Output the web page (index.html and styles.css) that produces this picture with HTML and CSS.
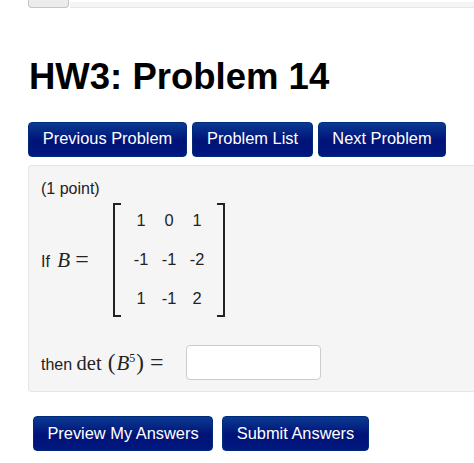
FILE: index.html
```html
<!DOCTYPE html>
<html lang="en">
<head>
  <meta charset="UTF-8" />
  <title>HW3: Problem 14</title>
  <link rel="stylesheet" href="styles.css">
</head>
<body>
  <div class="topbar">
    <div class="top-btn"></div>
    <div class="top-track"></div>
  </div>

  <h1>HW3: Problem 14</h1>

  <nav class="nav-btns">
    <a class="btn btn-prev">Previous Problem</a>
    <a class="btn btn-list">Problem List</a>
    <a class="btn btn-next">Next Problem</a>
  </nav>

  <main class="problem">
    <div class="points">(1 point)</div>
    <div class="matrix-line">
      <span class="label">If <span class="math"><i class="var-b">B</i><span class="rel">=</span></span></span>
      <div class="bracket-wrap">
        <div class="matrix">
          <span>1</span><span>0</span><span>1</span>
          <span>-1</span><span>-1</span><span>-2</span>
          <span>1</span><span>-1</span><span>2</span>
        </div>
      </div>
    </div>
    <div class="answer-line">
      <span class="label">then <span class="math">det <span class="paren">(</span><i>B</i><sup>5</sup><span class="paren">)</span><span class="rel">=</span></span></span>
      <input class="answer" type="text" />
    </div>
  </main>

  <div class="submit-btns">
    <button class="btn btn-preview">Preview My Answers</button>
    <button class="btn btn-submit">Submit Answers</button>
  </div>
</body>
</html>
```

FILE: styles.css
```css
* {
  margin: 0;
  padding: 0;
  box-sizing: border-box;
}

html, body {
  height: 100%;
  overflow: hidden;
}

body {
  font-family: "Liberation Sans", Arial, sans-serif;
  background: #fff;
  color: #222;
  padding-left: 28px;
}

/* --- top strip ------------------------------------------------------ */
.topbar {
  display: flex;
  gap: 1px;
  height: 8px;
}

.top-btn {
  width: 41px;
  background: #ececec;
  border: 1px solid #c4c4c4;
  border-top: 0;
  border-radius: 0 0 4px 4px;
}

.top-track {
  flex: 1;
  height: 6px;
  margin-top: 2px;
  background: #f5f5f5;
  border-bottom: 1px solid #e6e6e6;
}

/* --- heading -------------------------------------------------------- */
h1 {
  margin-top: 47px;
  margin-left: 1px;
  font-size: 36.5px;
  line-height: 44px;
  font-weight: 700;
  color: #000;
}

/* --- buttons -------------------------------------------------------- */
.btn {
  display: inline-block;
  height: 35px;
  font-family: inherit;
  font-size: 16.4px;
  line-height: 31px;
  text-align: center;
  color: #fff;
  background: linear-gradient(to bottom, #0a3a90, #001278 55%, #00187f);
  border: 1px solid #002a7a;
  border-radius: 4px;
}

.nav-btns {
  display: flex;
  gap: 5px;
  margin-top: 23px;
}

.btn-prev { width: 159px; }
.btn-list { width: 121px; }
.btn-next { width: 128px; }

/* --- problem panel -------------------------------------------------- */
.problem {
  height: 227px;
  margin-top: 8px;
  padding: 14px 12px 0;
  font-size: 16px;
  color: #222;
  background: #f5f5f5;
  border: 1px solid #e6e6e6;
  border-right: 0;
  border-radius: 4px 0 0 4px;
}

.points {
  line-height: 18px;
}

.math {
  font-family: "Liberation Serif", "DejaVu Serif", serif;
  font-size: 20.5px;
}

.math i {
  font-size: 21px;
}

.math .var-b {
  margin-left: 3px;
}

.math sup {
  font-size: 12px;
  line-height: 0;
}

.rel {
  margin-left: 5px;
  font-size: 24px;
  line-height: 0;
}

.paren {
  font-size: 23px;
  margin: 0 1px;
}

.matrix-line {
  display: flex;
  align-items: center;
  margin-top: 5px;
}

.matrix-line .label {
  width: 72px;
}

.bracket-wrap {
  position: relative;
  width: 112px;
  height: 114px;
  border-left: 2px solid #222;
  border-right: 2px solid #222;
}

.bracket-wrap::before,
.bracket-wrap::after {
  content: "";
  position: absolute;
  top: 0;
  bottom: 0;
  width: 6px;
  border-top: 2px solid #222;
  border-bottom: 2px solid #222;
}

.bracket-wrap::before { left: 0; }
.bracket-wrap::after { right: 0; }

.matrix {
  display: grid;
  grid-template-columns: repeat(3, 28px);
  grid-auto-rows: 39px;
  align-items: center;
  justify-items: center;
  align-content: center;
  justify-content: center;
  height: 100%;
  margin-top: -1px;
  font-size: 16.4px;
}

.answer-line {
  display: flex;
  align-items: center;
  margin-top: 28px;
}

.answer-line .label {
  width: 145px;
  white-space: nowrap;
}

.answer {
  width: 135px;
  height: 35px;
  background: #fff;
  border: 1px solid #ccc;
  border-radius: 4px;
}

/* --- submit row ----------------------------------------------------- */
.submit-btns {
  display: flex;
  gap: 9px;
  margin-top: 24px;
  margin-left: 5px;
}

.btn-preview { width: 180px; }
.btn-submit { width: 147px; }
```
